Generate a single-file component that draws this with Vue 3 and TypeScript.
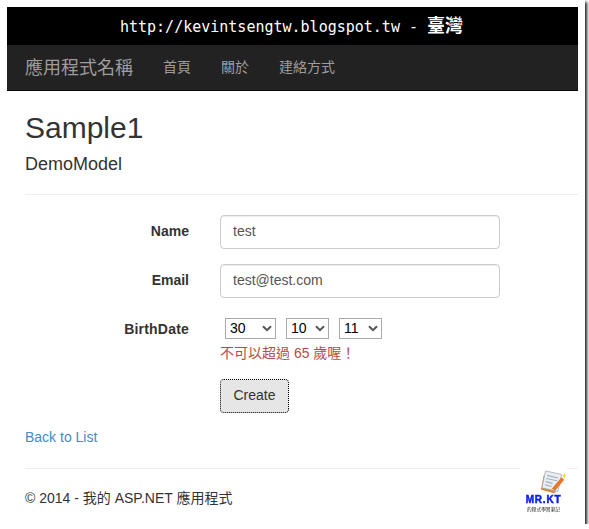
<script setup lang="ts">
const navLinks: string[] = ['首頁', '關於', '建絡方式']
const selects = [
  { value: '30', cls: 'wide' },
  { value: '10', cls: 'narrow' },
  { value: '11', cls: 'narrow' },
]
</script>

<template>
  <div class="shot">
    <div class="banner">http://kevintsengtw.blogspot.tw - <span class="banner-cjk">臺灣</span></div>
    <nav class="nav">
      <a class="brand">應用程式名稱</a>
      <a v-for="l in navLinks" :key="l" class="nav-link">{{ l }}</a>
    </nav>
    <main class="content">
      <h1 class="title">Sample1</h1>
      <h4 class="subtitle">DemoModel</h4>
      <hr class="rule" />
      <form class="form" @submit.prevent>
        <label class="label">Name</label>
        <input class="input" type="text" value="test" />
        <label class="label">Email</label>
        <input class="input" type="text" value="test@test.com" />
        <label class="label label-date">BirthDate</label>
        <div>
          <div class="selects">
            <span v-for="s in selects" :key="s.cls + s.value" class="select-wrap" :class="s.cls">
              <select class="select"><option>{{ s.value }}</option></select>
              <svg class="chevron" width="10" height="7" viewBox="0 0 10 7">
                <path d="M1 1.2 L5 5.2 L9 1.2" fill="none" stroke="#555" stroke-width="2" />
              </svg>
            </span>
          </div>
          <div class="error">不可以超過 65 歲喔！</div>
        </div>
        <span></span>
        <div><button class="btn" type="button">Create</button></div>
      </form>
      <a class="back">Back to List</a>
      <hr class="rule foot-rule" />
      <footer class="footer">© 2014 - 我的 ASP.NET 應用程式</footer>
    </main>
    <div class="logo">
      <svg class="logo-art" width="27" height="25" viewBox="0 0 30 28">
        <path d="M4 6 L1 22 L16 26 L20 20 Z" fill="#e8832a" />
        <path d="M6 1 L24 5 L20 24 L2 20 Z" fill="#e9eef3" stroke="#9aa3ad" stroke-width="0.8" />
        <path d="M8 6 L20 9 M7 9.500 L19 12 M6.300 13 L14 15 M5.500 16.500 L13 18.500" stroke="#9fb0c0" stroke-width="1.200" />
        <path d="M13 21 L24 8 L27 11 L17 23 Z" fill="#e8762a" />
        <path d="M25 7 L27 4 L29 6 L27.500 9.500 Z" fill="#f5d84a" />
      </svg>
      <div class="logo-name">MR.KT</div>
      <div class="logo-sub">的程式學習筆記</div>
    </div>
  </div>
</template>

<style>
html, body { margin: 0; background: #fff; overflow: hidden; }
</style>

<style scoped>
.shot {
  position: relative;
  box-sizing: border-box;
  width: 585px;
  height: 524px;
  padding: 7px 7px 0 7px;
  background: #fff;
  box-shadow: 2px 2px 3px rgba(0, 0, 0, 0.9);
  font-family: "Liberation Sans", "Noto Sans CJK TC", sans-serif;
  font-size: 14px;
  line-height: 20px;
  color: #333;
}
.banner {
  height: 38px;
  padding-right: 2px;
  background: #000;
  color: #fff;
  font-family: "DejaVu Sans Mono", "Noto Sans CJK TC", monospace;
  font-size: 15px;
  line-height: 38px;
  text-align: center;
}
.banner-cjk { font-size: 18px; font-weight: 700; }
.nav {
  box-sizing: border-box;
  height: 46px;
  display: flex;
  align-items: center;
  padding-left: 18px;
  background: #222;
  border-bottom: 1px solid #080808;
  color: #9d9d9d;
}
.brand { font-size: 18px; margin-right: 30px; }
.nav-link { margin-right: 30px; position: relative; top: -1px; }
.content { padding-left: 18px; }
.title {
  margin: 20px 0 0;
  font-size: 30px;
  line-height: 33px;
  font-weight: 400;
}
.subtitle {
  margin: 10px 0 0;
  font-size: 18px;
  line-height: 20px;
  font-weight: 400;
}
.rule {
  margin: 20px 0;
  border: 0;
  border-top: 1px solid #eee;
}
.form {
  display: grid;
  grid-template-columns: 165px 280px;
  column-gap: 30px;
  row-gap: 15px;
}
.label {
  padding: 6px 1px 0 0;
  text-align: right;
  font-weight: 700;
}
.label-date { letter-spacing: 0.2px; }
.input {
  box-sizing: border-box;
  width: 280px;
  height: 34px;
  padding: 5px 12px 7px;
  border: 1px solid #ccc;
  border-radius: 4px;
  background: #fff;
  color: #555;
  font: inherit;
  box-shadow: inset 0 1px 1px rgba(0, 0, 0, 0.075);
}
.selects {
  display: flex;
  gap: 10px;
  margin: 5px 0 0 5px;
}
.select-wrap { position: relative; display: block; height: 21px; }
.wide { width: 51px; }
.narrow { width: 43px; }
.select {
  appearance: none;
  box-sizing: border-box;
  display: block;
  width: 100%;
  height: 21px;
  margin: 0;
  padding: 0 0 1px 4px;
  border: 1px solid #a9a9a9;
  border-radius: 0;
  background: #fff;
  color: #000;
  font: 14px/18px "Liberation Sans", sans-serif;
}
.chevron { position: absolute; right: 4px; top: 7px; pointer-events: none; }
.error {
  margin-top: 4px;
  color: #b94a48;
}
.btn {
  box-sizing: border-box;
  display: block;
  width: 69px;
  height: 34px;
  margin: 1px 0 0;
  padding: 0 0 2px;
  border: 1px dotted #000;
  border-radius: 4px;
  background: #e6e6e6;
  color: #333;
  font: inherit;
}
.back {
  display: block;
  margin-top: 14px;
  color: #428bca;
}
.foot-rule { margin: 21px 0 0; }
.footer { margin-top: 19px; }
.logo {
  position: absolute;
  left: 520px;
  top: 464px;
  width: 47px;
  height: 54px;
  background: #fff;
  display: flex;
  flex-direction: column;
  align-items: center;
  filter: blur(0.3px);
}
.logo-art { margin: 6px 0 0 20px; align-self: flex-start; }
.logo-name {
  margin-top: 0;
  font-size: 10px;
  line-height: 9px;
  font-weight: 700;
  letter-spacing: 0.8px;
  color: #0b22f0;
  -webkit-text-stroke: 0.5px #0b22f0;
}
.logo-sub {
  margin-top: 3px;
  font-size: 4.7px;
  line-height: 6px;
  color: #222;
  white-space: nowrap;
}
</style>
